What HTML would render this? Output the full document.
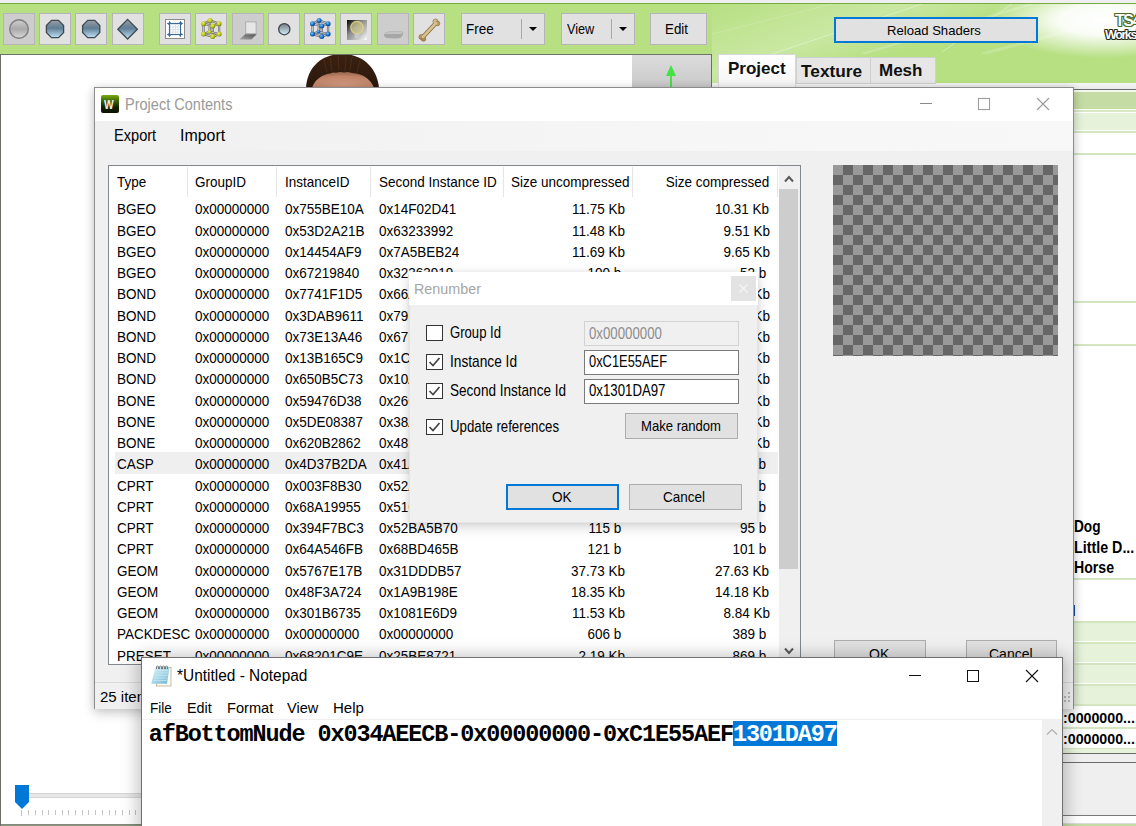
<!DOCTYPE html>
<html><head><meta charset="utf-8">
<style>
*{margin:0;padding:0;box-sizing:border-box}
html,body{width:1136px;height:826px;overflow:hidden;background:#fff;font-family:"Liberation Sans",sans-serif;color:#000;position:relative}
.a{position:absolute}
.tx{white-space:nowrap;line-height:normal}
</style></head><body>
<div class="a" style="left:0px;top:0px;width:1136px;height:3px;background:#efeff1"></div>
<div class="a" style="left:0px;top:3px;width:1136px;height:1px;background:#77ab3e"></div>
<div class="a" style="left:0px;top:4px;width:1136px;height:50px;background:#b7e083"></div>
<svg class="a" style="left:712px;top:4px" width="424" height="50"><g stroke="#fff" fill="none" opacity=".35"><path d="M60 50 L210 0" stroke-width="1"/><path d="M150 50 L320 0" stroke-width="2" opacity=".6"/><path d="M230 48 L300 0" stroke-width="1"/><path d="M270 50 L420 10" stroke-width="3" opacity=".5"/><path d="M0 30 L120 0" stroke-width="1" opacity=".5"/></g></svg>
<div class="a" style="left:0px;top:54px;width:712px;height:1px;background:#6e7466"></div>
<div class="a" style="left:0px;top:54px;width:1px;height:772px;background:#6b7062"></div>
<div class="a" style="left:712px;top:54px;width:424px;height:29px;background:#b7e083"></div>
<div class="a" style="left:712px;top:83px;width:424px;height:6px;background:linear-gradient(#f6f6f6,#e9e9e9)"></div>
<div class="a" style="left:712px;top:89px;width:424px;height:1px;background:#6a6a6a"></div>
<div class="a" style="left:712px;top:4px;width:424px;height:79px;background:radial-gradient(ellipse 115px 38px at 392px 16px,rgba(255,255,255,1) 0%,rgba(255,255,255,.92) 40%,rgba(255,255,255,0) 100%),linear-gradient(160deg,rgba(255,255,255,0) 0px,rgba(255,255,255,.25) 30%,rgba(255,255,255,0) 50%);"></div>
<svg width="0" height="0" class="a"><defs>
<linearGradient id="gS" x1="0" y1="0" x2="0" y2="1"><stop offset="0" stop-color="#cfcfcf"/><stop offset=".5" stop-color="#a9a9a9"/><stop offset="1" stop-color="#d8d8d8"/></linearGradient>
<linearGradient id="gB" x1="0" y1="0" x2="0" y2="1"><stop offset="0" stop-color="#9a9ea2"/><stop offset=".45" stop-color="#5f7d94"/><stop offset="1" stop-color="#bfe3f6"/></linearGradient>
<linearGradient id="gSp" x1="0" y1="0" x2="0" y2="1"><stop offset="0" stop-color="#767e84"/><stop offset=".5" stop-color="#a4b4bc"/><stop offset="1" stop-color="#d4f2fa"/></linearGradient>
<linearGradient id="gBulb" x1="0" y1="0" x2="1" y2="1"><stop offset="0" stop-color="#000"/><stop offset=".4" stop-color="#8a8a8a"/><stop offset=".75" stop-color="#c8c8c8"/><stop offset="1" stop-color="#fff"/></linearGradient>
<linearGradient id="gPl" x1="1" y1="0" x2="0" y2="1"><stop offset="0" stop-color="#505050"/><stop offset="1" stop-color="#a8a8a8"/></linearGradient>
<radialGradient id="gY" cx=".4" cy=".35" r=".7"><stop offset="0" stop-color="#e8ec50"/><stop offset=".6" stop-color="#b8c020"/><stop offset="1" stop-color="#5a7000"/></radialGradient>
<radialGradient id="gBl" cx=".4" cy=".35" r=".7"><stop offset="0" stop-color="#7ac4f4"/><stop offset=".55" stop-color="#1a70c8"/><stop offset="1" stop-color="#003a90"/></radialGradient>
<linearGradient id="gBone" x1="0" y1="0" x2="1" y2="1"><stop offset="0" stop-color="#e8d6a8"/><stop offset="1" stop-color="#9c7a45"/></linearGradient>
</defs></svg>
<div class="a" style="left:3px;top:13px;width:32px;height:32px;background:#cdcdcd;border:1px solid #b6b3bb;box-sizing:border-box"><svg class="a" style="left:-1px;top:-1px" width="32" height="32" viewBox="0 0 32 32"><ellipse cx="16" cy="16" rx="9.3" ry="9.3" fill="url(#gS)" stroke="#7e7e7e" stroke-width="1.4"/></svg></div>
<div class="a" style="left:39px;top:13px;width:32px;height:32px;background:#e1e1e1;border:1px solid #b6b3bb;box-sizing:border-box"><svg class="a" style="left:-1px;top:-1px" width="32" height="32" viewBox="0 0 32 32"><polygon points="12.5,7.4 19.5,7.4 24.6,12.5 24.6,19.5 19.5,24.6 12.5,24.6 7.4,19.5 7.4,12.5" fill="url(#gB)" stroke="#3e4a52" stroke-width="1.3"/></svg></div>
<div class="a" style="left:75px;top:13px;width:32px;height:32px;background:#e1e1e1;border:1px solid #b6b3bb;box-sizing:border-box"><svg class="a" style="left:-1px;top:-1px" width="32" height="32" viewBox="0 0 32 32"><polygon points="12.7,7.4 19.7,7.4 24.8,12.5 24.8,19.5 19.7,24.6 12.7,24.6 7.6,19.5 7.6,12.5" fill="url(#gB)" stroke="#3e4a52" stroke-width="1.3"/></svg></div>
<div class="a" style="left:112px;top:13px;width:32px;height:32px;background:#e1e1e1;border:1px solid #b6b3bb;box-sizing:border-box"><svg class="a" style="left:-1px;top:-1px" width="32" height="32" viewBox="0 0 32 32"><polygon points="15.6,6.4 25.4,16.2 15.6,26 5.8,16.2" fill="url(#gB)" stroke="#3e4a52" stroke-width="1.3"/></svg></div>
<div class="a" style="left:159px;top:13px;width:32px;height:32px;background:#e1e1e1;border:1px solid #b6b3bb;box-sizing:border-box"><svg class="a" style="left:-1px;top:-1px" width="32" height="32" viewBox="0 0 32 32"><rect x="6.5" y="6.5" width="19" height="19" fill="#fff" stroke="#8a8a8a"/><line x1="11.5" y1="9" x2="11.5" y2="23" stroke="#d2dde8" stroke-width=".8"/><line x1="9" y1="11.5" x2="23" y2="11.5" stroke="#d2dde8" stroke-width=".8"/><line x1="14.0" y1="9" x2="14.0" y2="23" stroke="#d2dde8" stroke-width=".8"/><line x1="9" y1="14.0" x2="23" y2="14.0" stroke="#d2dde8" stroke-width=".8"/><line x1="16.5" y1="9" x2="16.5" y2="23" stroke="#d2dde8" stroke-width=".8"/><line x1="9" y1="16.5" x2="23" y2="16.5" stroke="#d2dde8" stroke-width=".8"/><line x1="19.0" y1="9" x2="19.0" y2="23" stroke="#d2dde8" stroke-width=".8"/><line x1="9" y1="19.0" x2="23" y2="19.0" stroke="#d2dde8" stroke-width=".8"/><path d="M10.5 8.5v15M21.5 8.5v15M8.5 10.5h15M8.5 21.5h15" stroke="#3a6b9c" stroke-width="1"/><path d="M10.5 8l-1.5 2h3zM21.5 8l-1.5 2h3zM10.5 24l-1.5 -2h3zM21.5 24l-1.5 -2h3zM8 10.5l2 -1.5v3zM8 21.5l2 -1.5v3zM24 10.5l-2 -1.5v3zM24 21.5l-2 -1.5v3z" fill="#3a6b9c"/></svg></div>
<div class="a" style="left:195px;top:13px;width:32px;height:32px;background:#e1e1e1;border:1px solid #b6b3bb;box-sizing:border-box"><svg class="a" style="left:-1px;top:-1px" width="32" height="32" viewBox="0 0 32 32"><line x1="8.5" y1="10.7" x2="8.5" y2="21.1" stroke="#6e6e6e" stroke-width="2.3"/><line x1="8.5" y1="10.7" x2="8.5" y2="21.1" stroke="#e8e8e8" stroke-width=".7"/><line x1="24.1" y1="10.7" x2="24.1" y2="21.1" stroke="#6e6e6e" stroke-width="2.3"/><line x1="24.1" y1="10.7" x2="24.1" y2="21.1" stroke="#e8e8e8" stroke-width=".7"/><line x1="17.7" y1="13" x2="17.7" y2="23.6" stroke="#6e6e6e" stroke-width="2.3"/><line x1="17.7" y1="13" x2="17.7" y2="23.6" stroke="#e8e8e8" stroke-width=".7"/><line x1="15.1" y1="7.5" x2="14.5" y2="18.8" stroke="#6e6e6e" stroke-width="2.3"/><line x1="15.1" y1="7.5" x2="14.5" y2="18.8" stroke="#e8e8e8" stroke-width=".7"/><line x1="8.5" y1="10.7" x2="15.1" y2="7.5" stroke="#6e6e6e" stroke-width="2.3"/><line x1="8.5" y1="10.7" x2="15.1" y2="7.5" stroke="#e8e8e8" stroke-width=".7"/><line x1="15.1" y1="7.5" x2="24.1" y2="10.7" stroke="#6e6e6e" stroke-width="2.3"/><line x1="15.1" y1="7.5" x2="24.1" y2="10.7" stroke="#e8e8e8" stroke-width=".7"/><line x1="8.5" y1="10.7" x2="17.7" y2="13" stroke="#6e6e6e" stroke-width="2.3"/><line x1="8.5" y1="10.7" x2="17.7" y2="13" stroke="#e8e8e8" stroke-width=".7"/><line x1="17.7" y1="13" x2="24.1" y2="10.7" stroke="#6e6e6e" stroke-width="2.3"/><line x1="17.7" y1="13" x2="24.1" y2="10.7" stroke="#e8e8e8" stroke-width=".7"/><line x1="8.5" y1="21.1" x2="14.5" y2="18.8" stroke="#6e6e6e" stroke-width="2.3"/><line x1="8.5" y1="21.1" x2="14.5" y2="18.8" stroke="#e8e8e8" stroke-width=".7"/><line x1="14.5" y1="18.8" x2="24.1" y2="21.1" stroke="#6e6e6e" stroke-width="2.3"/><line x1="14.5" y1="18.8" x2="24.1" y2="21.1" stroke="#e8e8e8" stroke-width=".7"/><line x1="8.5" y1="21.1" x2="17.7" y2="23.6" stroke="#6e6e6e" stroke-width="2.3"/><line x1="8.5" y1="21.1" x2="17.7" y2="23.6" stroke="#e8e8e8" stroke-width=".7"/><line x1="17.7" y1="23.6" x2="24.1" y2="21.1" stroke="#6e6e6e" stroke-width="2.3"/><line x1="17.7" y1="23.6" x2="24.1" y2="21.1" stroke="#e8e8e8" stroke-width=".7"/><circle cx="14.5" cy="18.8" r="1.9" fill="url(#gY)"/><circle cx="15.1" cy="7.5" r="2.5" fill="url(#gY)"/><circle cx="8.5" cy="10.7" r="2.5" fill="url(#gY)"/><circle cx="24.1" cy="10.7" r="2.5" fill="url(#gY)"/><circle cx="8.5" cy="21.1" r="2.5" fill="url(#gY)"/><circle cx="24.1" cy="21.1" r="2.5" fill="url(#gY)"/><circle cx="17.7" cy="13" r="2.5" fill="url(#gY)"/><circle cx="17.7" cy="23.6" r="2.5" fill="url(#gY)"/></svg></div>
<div class="a" style="left:232px;top:13px;width:32px;height:32px;background:#cdcdcd;border:1px solid #b6b3bb;box-sizing:border-box"><svg class="a" style="left:-1px;top:-1px" width="32" height="32" viewBox="0 0 32 32"><rect x="13.7" y="8.9" width="10.4" height="11.8" fill="#e6e6e6" stroke="#a8a8a8" stroke-width=".9"/><polygon points="13.2,21.2 24.6,21.2 19.4,26.6 7.4,26.6" fill="url(#gPl)"/></svg></div>
<div class="a" style="left:268px;top:13px;width:32px;height:32px;background:#e1e1e1;border:1px solid #b6b3bb;box-sizing:border-box"><svg class="a" style="left:-1px;top:-1px" width="32" height="32" viewBox="0 0 32 32"><circle cx="16.3" cy="16.2" r="5.6" fill="url(#gSp)" stroke="#3e464c" stroke-width="1.3"/></svg></div>
<div class="a" style="left:304px;top:13px;width:32px;height:32px;background:#e1e1e1;border:1px solid #b6b3bb;box-sizing:border-box"><svg class="a" style="left:-1px;top:-1px" width="32" height="32" viewBox="0 0 32 32"><line x1="8.5" y1="10.7" x2="8.5" y2="21.1" stroke="#6e6e6e" stroke-width="2.3"/><line x1="8.5" y1="10.7" x2="8.5" y2="21.1" stroke="#e8e8e8" stroke-width=".7"/><line x1="24.1" y1="10.7" x2="24.1" y2="21.1" stroke="#6e6e6e" stroke-width="2.3"/><line x1="24.1" y1="10.7" x2="24.1" y2="21.1" stroke="#e8e8e8" stroke-width=".7"/><line x1="17.7" y1="13" x2="17.7" y2="23.6" stroke="#6e6e6e" stroke-width="2.3"/><line x1="17.7" y1="13" x2="17.7" y2="23.6" stroke="#e8e8e8" stroke-width=".7"/><line x1="15.1" y1="7.5" x2="14.5" y2="18.8" stroke="#6e6e6e" stroke-width="2.3"/><line x1="15.1" y1="7.5" x2="14.5" y2="18.8" stroke="#e8e8e8" stroke-width=".7"/><line x1="8.5" y1="10.7" x2="15.1" y2="7.5" stroke="#6e6e6e" stroke-width="2.3"/><line x1="8.5" y1="10.7" x2="15.1" y2="7.5" stroke="#e8e8e8" stroke-width=".7"/><line x1="15.1" y1="7.5" x2="24.1" y2="10.7" stroke="#6e6e6e" stroke-width="2.3"/><line x1="15.1" y1="7.5" x2="24.1" y2="10.7" stroke="#e8e8e8" stroke-width=".7"/><line x1="8.5" y1="10.7" x2="17.7" y2="13" stroke="#6e6e6e" stroke-width="2.3"/><line x1="8.5" y1="10.7" x2="17.7" y2="13" stroke="#e8e8e8" stroke-width=".7"/><line x1="17.7" y1="13" x2="24.1" y2="10.7" stroke="#6e6e6e" stroke-width="2.3"/><line x1="17.7" y1="13" x2="24.1" y2="10.7" stroke="#e8e8e8" stroke-width=".7"/><line x1="8.5" y1="21.1" x2="14.5" y2="18.8" stroke="#6e6e6e" stroke-width="2.3"/><line x1="8.5" y1="21.1" x2="14.5" y2="18.8" stroke="#e8e8e8" stroke-width=".7"/><line x1="14.5" y1="18.8" x2="24.1" y2="21.1" stroke="#6e6e6e" stroke-width="2.3"/><line x1="14.5" y1="18.8" x2="24.1" y2="21.1" stroke="#e8e8e8" stroke-width=".7"/><line x1="8.5" y1="21.1" x2="17.7" y2="23.6" stroke="#6e6e6e" stroke-width="2.3"/><line x1="8.5" y1="21.1" x2="17.7" y2="23.6" stroke="#e8e8e8" stroke-width=".7"/><line x1="17.7" y1="23.6" x2="24.1" y2="21.1" stroke="#6e6e6e" stroke-width="2.3"/><line x1="17.7" y1="23.6" x2="24.1" y2="21.1" stroke="#e8e8e8" stroke-width=".7"/><circle cx="14.5" cy="18.8" r="1.9" fill="url(#gBl)"/><circle cx="15.1" cy="7.5" r="2.5" fill="url(#gBl)"/><circle cx="8.5" cy="10.7" r="2.5" fill="url(#gBl)"/><circle cx="24.1" cy="10.7" r="2.5" fill="url(#gBl)"/><circle cx="8.5" cy="21.1" r="2.5" fill="url(#gBl)"/><circle cx="24.1" cy="21.1" r="2.5" fill="url(#gBl)"/><circle cx="17.7" cy="13" r="2.5" fill="url(#gBl)"/><circle cx="17.7" cy="23.6" r="2.5" fill="url(#gBl)"/></svg></div>
<div class="a" style="left:340px;top:13px;width:32px;height:32px;background:#e1e1e1;border:1px solid #b6b3bb;box-sizing:border-box"><svg class="a" style="left:-1px;top:-1px" width="32" height="32" viewBox="0 0 32 32"><rect x="7" y="7" width="20" height="20" fill="url(#gBulb)"/><circle cx="17" cy="14.5" r="6.6" fill="#d8d090" opacity=".6"/><circle cx="17" cy="14.5" r="6.2" fill="none" stroke="#e0d878" stroke-width="1.2" opacity=".8"/><rect x="14.5" y="20.5" width="5" height="5" rx="1.5" fill="#c8c8c8"/></svg></div>
<div class="a" style="left:377px;top:13px;width:32px;height:32px;background:#cdcdcd;border:1px solid #b6b3bb;box-sizing:border-box"><svg class="a" style="left:-1px;top:-1px" width="32" height="32" viewBox="0 0 32 32"><path d="M7 21.5 Q8 19 12 18.5 L25 18.5 Q27 19.5 26 21.5 L24 24.5 Q22 25.5 18 25.5 L10 25 Q7 24 7 21.5Z" fill="#a6a6a6"/><path d="M7.5 21 Q9 19 12 19 L25 19 Q26 20 25 21 Z" fill="#c4c4c4"/></svg></div>
<div class="a" style="left:413px;top:13px;width:32px;height:32px;background:#e1e1e1;border:1px solid #b6b3bb;box-sizing:border-box"><svg class="a" style="left:-1px;top:-1px" width="32" height="32" viewBox="0 0 32 32"><path d="M10 24 L23 10" stroke="#8a6a3a" stroke-width="4.2" stroke-linecap="round"/><circle cx="8.5" cy="24" r="2.6" fill="#b89860" stroke="#8a6a3a" stroke-width=".6"/><circle cx="10.5" cy="26" r="2.3" fill="#a88850" stroke="#8a6a3a" stroke-width=".6"/><circle cx="22.5" cy="8.5" r="2.6" fill="#d0b880" stroke="#8a6a3a" stroke-width=".6"/><circle cx="24.5" cy="10.5" r="2.3" fill="#b89860" stroke="#8a6a3a" stroke-width=".6"/><path d="M10 24 L23 10" stroke="#d8c090" stroke-width="2.6" stroke-linecap="round"/></svg></div>
<div class="a" style="left:461px;top:13px;width:84px;height:32px;background:#e1e1e1;border:1px solid #b6b3bb"></div>
<div class="a" style="left:521px;top:19px;width:1px;height:20px;background:#a9a9a9"></div>
<svg class="a" style="left:529px;top:27px" width="9" height="5"><polygon points="0,0 8,0 4,4" fill="#000"/></svg>
<div class="a tx" style="top:21.30px;font-size:13.81px;color:#000;font-family:'Liberation Sans',sans-serif;left:466.4px;transform:scaleX(0.976);transform-origin:0 0;">Free</div>
<div class="a" style="left:561px;top:13px;width:74px;height:32px;background:#e1e1e1;border:1px solid #b6b3bb"></div>
<div class="a" style="left:611px;top:19px;width:1px;height:20px;background:#a9a9a9"></div>
<svg class="a" style="left:619px;top:27px" width="9" height="5"><polygon points="0,0 8,0 4,4" fill="#000"/></svg>
<div class="a tx" style="top:21.30px;font-size:13.81px;color:#000;font-family:'Liberation Sans',sans-serif;left:566.7px;transform:scaleX(0.92);transform-origin:0 0;">View</div>
<div class="a" style="left:650px;top:13px;width:57px;height:32px;background:#e1e1e1;border:1px solid #b6b3bb"></div>
<div class="a tx" style="top:21.30px;font-size:13.81px;color:#000;font-family:'Liberation Sans',sans-serif;left:665.2px;transform:scaleX(0.966);transform-origin:0 0;">Edit</div>
<div class="a" style="left:834px;top:17px;width:204px;height:26px;background:#e1e1e1;border:2px solid #0078d7"></div>
<div class="a tx" style="top:22.60px;font-size:13.37px;color:#000;font-family:'Liberation Sans',sans-serif;left:887.0px;transform:scaleX(0.98);transform-origin:0 0;">Reload Shaders</div>
<div class="a tx" style="left:1115px;top:12px;font-size:16px;font-weight:bold;color:#fff;letter-spacing:-1.5px;text-shadow:1px 0 #4a6a2a,-1px 0 #4a6a2a,0 1px #4a6a2a,0 -1px #4a6a2a,1px 1px #4a6a2a,-1px -1px #4a6a2a,1px -1px #4a6a2a,-1px 1px #4a6a2a">TS4</div>
<div class="a tx" style="left:1105px;top:28px;font-size:12.5px;font-weight:bold;color:#fff;letter-spacing:-1.4px;text-shadow:1px 0 #222,-1px 0 #222,0 1px #222,0 -1px #222,1px 1px #3a5a20,-1px -1px #3a5a20,1px -1px #3a5a20,-1px 1px #3a5a20">Workshop</div>
<div class="a" style="left:632px;top:55px;width:80px;height:32px;background:linear-gradient(#dcdcdc,#c9c9c9);border-right:1px solid #6e6e6e"></div>
<svg class="a" style="left:665px;top:65px" width="12" height="23"><polygon points="6,0 11,11 1,11" fill="#44e244"/><rect x="5" y="10" width="2" height="13" fill="#44e244"/></svg>
<div class="a" style="left:718px;top:54px;width:78px;height:34px;background:linear-gradient(#ffffff,#f4f4f4);border:1px solid #d8d8d8;border-bottom:none"></div>
<div class="a" style="left:796px;top:57px;width:75px;height:27px;background:#e6e6e6;border:1px solid #cfcfcf"></div>
<div class="a" style="left:870px;top:57px;width:66px;height:27px;background:#e6e6e6;border:1px solid #cfcfcf"></div>
<div class="a tx" style="top:58.62px;font-size:17px;color:#111;font-family:'Liberation Sans',sans-serif;font-weight:bold;left:728px;">Project</div>
<div class="a tx" style="top:60.84px;font-size:17.3px;color:#111;font-family:'Liberation Sans',sans-serif;font-weight:bold;left:801px;">Texture</div>
<div class="a tx" style="top:61.12px;font-size:17px;color:#111;font-family:'Liberation Sans',sans-serif;font-weight:bold;left:879px;">Mesh</div>
<svg class="a" style="left:300px;top:55px" width="90" height="33" viewBox="0 0 90 33">
<defs><linearGradient id="hair" x1="0" y1="0" x2="0" y2="1"><stop offset="0" stop-color="#3a2112"/><stop offset="1" stop-color="#2a180c"/></linearGradient>
<radialGradient id="skin" cx=".5" cy=".8" r=".75"><stop offset="0" stop-color="#d29a80"/><stop offset=".7" stop-color="#c08468"/><stop offset="1" stop-color="#9c6a52"/></radialGradient></defs>
<path d="M6 33 C7 12 22 -1 42 -1 C62 -1 77 12 79 33 Z" fill="url(#hair)"/>
<path d="M30 2 L32 16 M38 1 L39 15 M46 1 L45 16 M52 2 L50 15 M24 5 L27 17 M60 5 L57 18" stroke="#5a3418" stroke-width="1" opacity=".6"/>
<path d="M12 33 C14 26 20 21 27 19 L30 18.5 L33 17.5 L36 17.8 L40 17 L44 17.4 L48 17 L52 18 L56 18.5 L60 19.5 C67 22 72 27 74 33 Z" fill="url(#skin)"/>
</svg>
<div class="a" style="left:1073px;top:90px;width:63px;height:2px;background:#f4f8ef"></div>
<div class="a" style="left:1073px;top:92px;width:63px;height:17px;background:#c5dca5"></div>
<div class="a" style="left:1073px;top:110px;width:63px;height:2px;background:#d9e9c8"></div>
<div class="a" style="left:1073px;top:113px;width:63px;height:17px;background:#e6f3da"></div>
<div class="a" style="left:1073px;top:131px;width:63px;height:2px;background:#d5e6c4"></div>
<div class="a" style="left:1073px;top:153px;width:63px;height:2px;background:#d3e6c0"></div>
<div class="a" style="left:1073px;top:301px;width:63px;height:2px;background:#d3e6c0"></div>
<div class="a" style="left:1073px;top:344px;width:63px;height:2px;background:#d3e6c0"></div>
<div class="a" style="left:1073px;top:578px;width:63px;height:2px;background:#d3e6c0"></div>
<div class="a tx" style="top:518.06px;font-size:15.84px;color:#000;font-family:'Liberation Sans',sans-serif;font-weight:bold;left:1074.2px;transform:scaleX(0.863);transform-origin:0 0;">Dog</div>
<div class="a tx" style="top:538.86px;font-size:15.84px;color:#000;font-family:'Liberation Sans',sans-serif;font-weight:bold;left:1074.2px;transform:scaleX(0.902);transform-origin:0 0;">Little D...</div>
<div class="a tx" style="top:559.46px;font-size:15.84px;color:#000;font-family:'Liberation Sans',sans-serif;font-weight:bold;left:1074.2px;transform:scaleX(0.891);transform-origin:0 0;">Horse</div>
<div class="a" style="left:1073px;top:605px;width:2px;height:11px;background:#1a4aa0"></div>
<div class="a" style="left:1073px;top:621px;width:63px;height:20px;background:#e6f2da;border-top:2px solid #d3e6c0"></div>
<div class="a" style="left:1073px;top:642px;width:63px;height:20px;background:#e6f2da;border-top:2px solid #d3e6c0"></div>
<div class="a" style="left:1073px;top:663px;width:63px;height:20px;background:#e6f2da;border-top:2px solid #d3e6c0"></div>
<div class="a" style="left:1073px;top:684px;width:63px;height:20px;background:#e6f2da;border-top:2px solid #d3e6c0"></div>
<div class="a" style="left:1073px;top:704px;width:63px;height:2px;background:#d3e6c0"></div>
<div class="a tx" style="top:709.71px;font-size:14.24px;color:#000;font-family:'Liberation Sans',sans-serif;font-weight:bold;left:1063.0px;transform:scaleX(0.999);transform-origin:0 0;">:0000000...</div>
<div class="a tx" style="top:730.61px;font-size:14.24px;color:#000;font-family:'Liberation Sans',sans-serif;font-weight:bold;left:1063.0px;transform:scaleX(0.999);transform-origin:0 0;">:0000000...</div>
<div class="a" style="left:1063px;top:727px;width:73px;height:2px;background:#d3e6c0"></div>
<div class="a" style="left:1063px;top:748px;width:73px;height:5px;background:#e6f2da;border-top:1px solid #d3e6c0"></div>
<div class="a" style="left:1063px;top:753px;width:73px;height:1px;background:#6a6a6a"></div>
<div class="a" style="left:1063px;top:754px;width:73px;height:8px;background:#efefef"></div>
<div class="a" style="left:1063px;top:762px;width:73px;height:1px;background:#6a6a6a"></div>
<div class="a" style="left:1063px;top:763px;width:73px;height:52px;background:#efefef"></div>
<div class="a" style="left:1063px;top:815px;width:73px;height:1px;background:#7a7a7a"></div>
<div class="a" style="left:1063px;top:816px;width:73px;height:7px;background:#fff"></div>
<div class="a" style="left:1063px;top:823px;width:73px;height:1px;background:#dcdcdc"></div>
<div class="a" style="left:1063px;top:824px;width:73px;height:2px;background:#c5dca5"></div>
<div class="a" style="left:1px;top:824px;width:1062px;height:1px;background:#858585"></div>
<div class="a" style="left:1px;top:825px;width:1062px;height:1px;background:#8aa070"></div>
<div class="a" style="left:15px;top:793px;width:1000px;height:5px;background:#e7e7e7;border:1px solid #d6d6d6"></div>
<svg class="a" style="left:14px;top:785px" width="16" height="25"><polygon points="1,0 15,0 15,17 8,24 1,17" fill="#0078d7"/></svg>
<div class="a" style="left:21px;top:810px;width:1px;height:6px;background:#c4c4c4"></div>
<div class="a" style="left:28px;top:810px;width:1px;height:5px;background:#c4c4c4"></div>
<div class="a" style="left:35px;top:810px;width:1px;height:5px;background:#c4c4c4"></div>
<div class="a" style="left:42px;top:810px;width:1px;height:5px;background:#c4c4c4"></div>
<div class="a" style="left:48px;top:810px;width:1px;height:5px;background:#c4c4c4"></div>
<div class="a" style="left:55px;top:810px;width:1px;height:5px;background:#c4c4c4"></div>
<div class="a" style="left:62px;top:810px;width:1px;height:5px;background:#c4c4c4"></div>
<div class="a" style="left:68px;top:810px;width:1px;height:5px;background:#c4c4c4"></div>
<div class="a" style="left:75px;top:810px;width:1px;height:5px;background:#c4c4c4"></div>
<div class="a" style="left:82px;top:810px;width:1px;height:5px;background:#c4c4c4"></div>
<div class="a" style="left:88px;top:810px;width:1px;height:5px;background:#c4c4c4"></div>
<div class="a" style="left:95px;top:810px;width:1px;height:5px;background:#c4c4c4"></div>
<div class="a" style="left:102px;top:810px;width:1px;height:5px;background:#c4c4c4"></div>
<div class="a" style="left:109px;top:810px;width:1px;height:5px;background:#c4c4c4"></div>
<div class="a" style="left:115px;top:810px;width:1px;height:5px;background:#c4c4c4"></div>
<div class="a" style="left:122px;top:810px;width:1px;height:5px;background:#c4c4c4"></div>
<div class="a" style="left:129px;top:810px;width:1px;height:5px;background:#c4c4c4"></div>
<div class="a" style="left:135px;top:810px;width:1px;height:5px;background:#c4c4c4"></div>
<div class="a" style="left:142px;top:810px;width:1px;height:5px;background:#c4c4c4"></div>
<div class="a" style="left:94px;top:87px;width:980px;height:622px;background:#f0f0f0;border:1px solid #8c8c8c;border-bottom:none;box-shadow:0 4px 11px 0 rgba(0,0,0,.2),0 0 8px 0 rgba(0,0,0,.08)"></div>
<div class="a" style="left:95px;top:88px;width:978px;height:33px;background:#fff"></div>
<div class="a" style="left:101px;top:95px;width:18px;height:18px;border-radius:2px;background:linear-gradient(#7aac12,#3a6204 35%,#142400 65%,#0a1200)"></div>
<div class="a tx" style="left:104px;top:98px;font-size:12px;font-weight:bold;color:#eee;font-family:'Liberation Sans',sans-serif;transform:scaleX(.85);transform-origin:0 0">W</div>
<div class="a tx" style="top:95.99px;font-size:15.7px;color:#9a9a9a;font-family:'Liberation Sans',sans-serif;left:125.0px;transform:scaleX(0.926);transform-origin:0 0;">Project Contents</div>
<div class="a" style="left:920px;top:103px;width:12px;height:1px;background:#8a8a8a"></div>
<div class="a" style="left:978px;top:98px;width:12px;height:12px;border:1px solid #9a9a9a"></div>
<svg class="a" style="left:1036px;top:97px" width="14" height="14"><path d="M1 1L13 13M13 1L1 13" stroke="#9a9a9a" stroke-width="1.1"/></svg>
<div class="a" style="left:95px;top:121px;width:978px;height:30px;background:linear-gradient(90deg,#f0f0f0,#f6f6f6 60%,#f8f8f8)"></div>
<div class="a tx" style="top:126.83px;font-size:15.99px;color:#000;font-family:'Liberation Sans',sans-serif;left:113.8px;transform:scaleX(0.913);transform-origin:0 0;">Export</div>
<div class="a tx" style="top:126.83px;font-size:15.99px;color:#000;font-family:'Liberation Sans',sans-serif;left:180.0px;transform:scaleX(0.997);transform-origin:0 0;">Import</div>
<div class="a" style="left:108px;top:165px;width:693px;height:500px;background:#fff;border:1px solid #828790;overflow:hidden">
<div class="a" style="left:78px;top:1px;width:1px;height:30px;background:#e5e5e5"></div>
<div class="a" style="left:167px;top:1px;width:1px;height:30px;background:#e5e5e5"></div>
<div class="a" style="left:261px;top:1px;width:1px;height:30px;background:#e5e5e5"></div>
<div class="a" style="left:394px;top:1px;width:1px;height:30px;background:#e5e5e5"></div>
<div class="a" style="left:523px;top:1px;width:1px;height:30px;background:#e5e5e5"></div>
<div class="a" style="left:668px;top:1px;width:1px;height:30px;background:#e5e5e5"></div>
<div class="a tx" style="left:7.5px;top:7.88px;font-size:14.5px;color:#000;transform:scaleX(0.93);transform-origin:0 0">Type</div>
<div class="a tx" style="left:85.5px;top:7.88px;font-size:14.5px;color:#000;transform:scaleX(0.93);transform-origin:0 0">GroupID</div>
<div class="a tx" style="left:176px;top:7.88px;font-size:14.5px;color:#000;transform:scaleX(0.93);transform-origin:0 0">InstanceID</div>
<div class="a tx" style="left:269.5px;top:7.88px;font-size:14.5px;color:#000;transform:scaleX(0.93);transform-origin:0 0">Second Instance ID</div>
<div class="a tx" style="left:401.5px;top:7.88px;font-size:14.5px;color:#000;transform:scaleX(0.93);transform-origin:0 0">Size uncompressed</div>
<div class="a tx" style="right:31px;top:7.88px;font-size:14.5px;color:#000;transform:scaleX(0.93);transform-origin:100% 0">Size compressed</div>
<div class="a tx" style="left:7.5px;top:35.38px;font-size:14.5px;color:#000;transform:scaleX(0.93);transform-origin:0 0">BGEO</div>
<div class="a tx" style="left:85.5px;top:35.38px;font-size:14.5px;color:#000;transform:scaleX(0.93);transform-origin:0 0">0x00000000</div>
<div class="a tx" style="left:176px;top:35.38px;font-size:14.5px;color:#000;transform:scaleX(0.93);transform-origin:0 0">0x755BE10A</div>
<div class="a tx" style="left:269.5px;top:35.38px;font-size:14.5px;color:#000;transform:scaleX(0.93);transform-origin:0 0">0x14F02D41</div>
<div class="a tx" style="right:175px;top:35.38px;font-size:14.5px;color:#000;transform:scaleX(0.93);transform-origin:100% 0">11.75 Kb</div>
<div class="a tx" style="right:30.5px;top:35.38px;font-size:14.5px;color:#000;transform:scaleX(0.93);transform-origin:100% 0">10.31 Kb</div>
<div class="a tx" style="left:7.5px;top:56.63px;font-size:14.5px;color:#000;transform:scaleX(0.93);transform-origin:0 0">BGEO</div>
<div class="a tx" style="left:85.5px;top:56.63px;font-size:14.5px;color:#000;transform:scaleX(0.93);transform-origin:0 0">0x00000000</div>
<div class="a tx" style="left:176px;top:56.63px;font-size:14.5px;color:#000;transform:scaleX(0.93);transform-origin:0 0">0x53D2A21B</div>
<div class="a tx" style="left:269.5px;top:56.63px;font-size:14.5px;color:#000;transform:scaleX(0.93);transform-origin:0 0">0x63233992</div>
<div class="a tx" style="right:175px;top:56.63px;font-size:14.5px;color:#000;transform:scaleX(0.93);transform-origin:100% 0">11.48 Kb</div>
<div class="a tx" style="right:30.5px;top:56.63px;font-size:14.5px;color:#000;transform:scaleX(0.93);transform-origin:100% 0">9.51 Kb</div>
<div class="a tx" style="left:7.5px;top:77.88px;font-size:14.5px;color:#000;transform:scaleX(0.93);transform-origin:0 0">BGEO</div>
<div class="a tx" style="left:85.5px;top:77.88px;font-size:14.5px;color:#000;transform:scaleX(0.93);transform-origin:0 0">0x00000000</div>
<div class="a tx" style="left:176px;top:77.88px;font-size:14.5px;color:#000;transform:scaleX(0.93);transform-origin:0 0">0x14454AF9</div>
<div class="a tx" style="left:269.5px;top:77.88px;font-size:14.5px;color:#000;transform:scaleX(0.93);transform-origin:0 0">0x7A5BEB24</div>
<div class="a tx" style="right:175px;top:77.88px;font-size:14.5px;color:#000;transform:scaleX(0.93);transform-origin:100% 0">11.69 Kb</div>
<div class="a tx" style="right:30.5px;top:77.88px;font-size:14.5px;color:#000;transform:scaleX(0.93);transform-origin:100% 0">9.65 Kb</div>
<div class="a tx" style="left:7.5px;top:99.13px;font-size:14.5px;color:#000;transform:scaleX(0.93);transform-origin:0 0">BGEO</div>
<div class="a tx" style="left:85.5px;top:99.13px;font-size:14.5px;color:#000;transform:scaleX(0.93);transform-origin:0 0">0x00000000</div>
<div class="a tx" style="left:176px;top:99.13px;font-size:14.5px;color:#000;transform:scaleX(0.93);transform-origin:0 0">0x67219840</div>
<div class="a tx" style="left:269.5px;top:99.13px;font-size:14.5px;color:#000;transform:scaleX(0.93);transform-origin:0 0">0x32363919</div>
<div class="a tx" style="right:178.5px;top:99.13px;font-size:14.5px;color:#000;transform:scaleX(0.93);transform-origin:100% 0">100 b</div>
<div class="a tx" style="right:34.0px;top:99.13px;font-size:14.5px;color:#000;transform:scaleX(0.93);transform-origin:100% 0">52 b</div>
<div class="a tx" style="left:7.5px;top:120.38px;font-size:14.5px;color:#000;transform:scaleX(0.93);transform-origin:0 0">BOND</div>
<div class="a tx" style="left:85.5px;top:120.38px;font-size:14.5px;color:#000;transform:scaleX(0.93);transform-origin:0 0">0x00000000</div>
<div class="a tx" style="left:176px;top:120.38px;font-size:14.5px;color:#000;transform:scaleX(0.93);transform-origin:0 0">0x7741F1D5</div>
<div class="a tx" style="left:269.5px;top:120.38px;font-size:14.5px;color:#000;transform:scaleX(0.93);transform-origin:0 0">0x66A1C3B2</div>
<div class="a tx" style="right:175px;top:120.38px;font-size:14.5px;color:#000;transform:scaleX(0.93);transform-origin:100% 0">1.21 Kb</div>
<div class="a tx" style="right:30.5px;top:120.38px;font-size:14.5px;color:#000;transform:scaleX(0.93);transform-origin:100% 0">1.01 Kb</div>
<div class="a tx" style="left:7.5px;top:141.63px;font-size:14.5px;color:#000;transform:scaleX(0.93);transform-origin:0 0">BOND</div>
<div class="a tx" style="left:85.5px;top:141.63px;font-size:14.5px;color:#000;transform:scaleX(0.93);transform-origin:0 0">0x00000000</div>
<div class="a tx" style="left:176px;top:141.63px;font-size:14.5px;color:#000;transform:scaleX(0.93);transform-origin:0 0">0x3DAB9611</div>
<div class="a tx" style="left:269.5px;top:141.63px;font-size:14.5px;color:#000;transform:scaleX(0.93);transform-origin:0 0">0x79E2D4A1</div>
<div class="a tx" style="right:175px;top:141.63px;font-size:14.5px;color:#000;transform:scaleX(0.93);transform-origin:100% 0">1.21 Kb</div>
<div class="a tx" style="right:30.5px;top:141.63px;font-size:14.5px;color:#000;transform:scaleX(0.93);transform-origin:100% 0">1.01 Kb</div>
<div class="a tx" style="left:7.5px;top:162.88px;font-size:14.5px;color:#000;transform:scaleX(0.93);transform-origin:0 0">BOND</div>
<div class="a tx" style="left:85.5px;top:162.88px;font-size:14.5px;color:#000;transform:scaleX(0.93);transform-origin:0 0">0x00000000</div>
<div class="a tx" style="left:176px;top:162.88px;font-size:14.5px;color:#000;transform:scaleX(0.93);transform-origin:0 0">0x73E13A46</div>
<div class="a tx" style="left:269.5px;top:162.88px;font-size:14.5px;color:#000;transform:scaleX(0.93);transform-origin:0 0">0x67B1A2C3</div>
<div class="a tx" style="right:175px;top:162.88px;font-size:14.5px;color:#000;transform:scaleX(0.93);transform-origin:100% 0">1.21 Kb</div>
<div class="a tx" style="right:30.5px;top:162.88px;font-size:14.5px;color:#000;transform:scaleX(0.93);transform-origin:100% 0">1.01 Kb</div>
<div class="a tx" style="left:7.5px;top:184.13px;font-size:14.5px;color:#000;transform:scaleX(0.93);transform-origin:0 0">BOND</div>
<div class="a tx" style="left:85.5px;top:184.13px;font-size:14.5px;color:#000;transform:scaleX(0.93);transform-origin:0 0">0x00000000</div>
<div class="a tx" style="left:176px;top:184.13px;font-size:14.5px;color:#000;transform:scaleX(0.93);transform-origin:0 0">0x13B165C9</div>
<div class="a tx" style="left:269.5px;top:184.13px;font-size:14.5px;color:#000;transform:scaleX(0.93);transform-origin:0 0">0x1C3D2E4F</div>
<div class="a tx" style="right:175px;top:184.13px;font-size:14.5px;color:#000;transform:scaleX(0.93);transform-origin:100% 0">1.21 Kb</div>
<div class="a tx" style="right:30.5px;top:184.13px;font-size:14.5px;color:#000;transform:scaleX(0.93);transform-origin:100% 0">1.01 Kb</div>
<div class="a tx" style="left:7.5px;top:205.38px;font-size:14.5px;color:#000;transform:scaleX(0.93);transform-origin:0 0">BOND</div>
<div class="a tx" style="left:85.5px;top:205.38px;font-size:14.5px;color:#000;transform:scaleX(0.93);transform-origin:0 0">0x00000000</div>
<div class="a tx" style="left:176px;top:205.38px;font-size:14.5px;color:#000;transform:scaleX(0.93);transform-origin:0 0">0x650B5C73</div>
<div class="a tx" style="left:269.5px;top:205.38px;font-size:14.5px;color:#000;transform:scaleX(0.93);transform-origin:0 0">0x10A2B3C4</div>
<div class="a tx" style="right:175px;top:205.38px;font-size:14.5px;color:#000;transform:scaleX(0.93);transform-origin:100% 0">1.21 Kb</div>
<div class="a tx" style="right:30.5px;top:205.38px;font-size:14.5px;color:#000;transform:scaleX(0.93);transform-origin:100% 0">1.01 Kb</div>
<div class="a tx" style="left:7.5px;top:226.63px;font-size:14.5px;color:#000;transform:scaleX(0.93);transform-origin:0 0">BONE</div>
<div class="a tx" style="left:85.5px;top:226.63px;font-size:14.5px;color:#000;transform:scaleX(0.93);transform-origin:0 0">0x00000000</div>
<div class="a tx" style="left:176px;top:226.63px;font-size:14.5px;color:#000;transform:scaleX(0.93);transform-origin:0 0">0x59476D38</div>
<div class="a tx" style="left:269.5px;top:226.63px;font-size:14.5px;color:#000;transform:scaleX(0.93);transform-origin:0 0">0x26C1D2E3</div>
<div class="a tx" style="right:175px;top:226.63px;font-size:14.5px;color:#000;transform:scaleX(0.93);transform-origin:100% 0">1.21 Kb</div>
<div class="a tx" style="right:30.5px;top:226.63px;font-size:14.5px;color:#000;transform:scaleX(0.93);transform-origin:100% 0">1.01 Kb</div>
<div class="a tx" style="left:7.5px;top:247.88px;font-size:14.5px;color:#000;transform:scaleX(0.93);transform-origin:0 0">BONE</div>
<div class="a tx" style="left:85.5px;top:247.88px;font-size:14.5px;color:#000;transform:scaleX(0.93);transform-origin:0 0">0x00000000</div>
<div class="a tx" style="left:176px;top:247.88px;font-size:14.5px;color:#000;transform:scaleX(0.93);transform-origin:0 0">0x5DE08387</div>
<div class="a tx" style="left:269.5px;top:247.88px;font-size:14.5px;color:#000;transform:scaleX(0.93);transform-origin:0 0">0x38A1B2C3</div>
<div class="a tx" style="right:175px;top:247.88px;font-size:14.5px;color:#000;transform:scaleX(0.93);transform-origin:100% 0">1.21 Kb</div>
<div class="a tx" style="right:30.5px;top:247.88px;font-size:14.5px;color:#000;transform:scaleX(0.93);transform-origin:100% 0">1.01 Kb</div>
<div class="a tx" style="left:7.5px;top:269.13px;font-size:14.5px;color:#000;transform:scaleX(0.93);transform-origin:0 0">BONE</div>
<div class="a tx" style="left:85.5px;top:269.13px;font-size:14.5px;color:#000;transform:scaleX(0.93);transform-origin:0 0">0x00000000</div>
<div class="a tx" style="left:176px;top:269.13px;font-size:14.5px;color:#000;transform:scaleX(0.93);transform-origin:0 0">0x620B2862</div>
<div class="a tx" style="left:269.5px;top:269.13px;font-size:14.5px;color:#000;transform:scaleX(0.93);transform-origin:0 0">0x48D1E2F3</div>
<div class="a tx" style="right:175px;top:269.13px;font-size:14.5px;color:#000;transform:scaleX(0.93);transform-origin:100% 0">1.21 Kb</div>
<div class="a tx" style="right:30.5px;top:269.13px;font-size:14.5px;color:#000;transform:scaleX(0.93);transform-origin:100% 0">1.01 Kb</div>
<div class="a" style="left:6px;top:286px;width:663px;height:22px;background:#efefef"></div>
<div class="a tx" style="left:7.5px;top:290.38px;font-size:14.5px;color:#000;transform:scaleX(0.93);transform-origin:0 0">CASP</div>
<div class="a tx" style="left:85.5px;top:290.38px;font-size:14.5px;color:#000;transform:scaleX(0.93);transform-origin:0 0">0x00000000</div>
<div class="a tx" style="left:176px;top:290.38px;font-size:14.5px;color:#000;transform:scaleX(0.93);transform-origin:0 0">0x4D37B2DA</div>
<div class="a tx" style="left:269.5px;top:290.38px;font-size:14.5px;color:#000;transform:scaleX(0.93);transform-origin:0 0">0x41A2B3C4</div>
<div class="a tx" style="right:175px;top:290.38px;font-size:14.5px;color:#000;transform:scaleX(0.93);transform-origin:100% 0">1.21 Kb</div>
<div class="a tx" style="right:34.0px;top:290.38px;font-size:14.5px;color:#000;transform:scaleX(0.93);transform-origin:100% 0">b</div>
<div class="a tx" style="left:7.5px;top:311.63px;font-size:14.5px;color:#000;transform:scaleX(0.93);transform-origin:0 0">CPRT</div>
<div class="a tx" style="left:85.5px;top:311.63px;font-size:14.5px;color:#000;transform:scaleX(0.93);transform-origin:0 0">0x00000000</div>
<div class="a tx" style="left:176px;top:311.63px;font-size:14.5px;color:#000;transform:scaleX(0.93);transform-origin:0 0">0x003F8B30</div>
<div class="a tx" style="left:269.5px;top:311.63px;font-size:14.5px;color:#000;transform:scaleX(0.93);transform-origin:0 0">0x52A1B2C3</div>
<div class="a tx" style="right:178.5px;top:311.63px;font-size:14.5px;color:#000;transform:scaleX(0.93);transform-origin:100% 0">115 b</div>
<div class="a tx" style="right:34.0px;top:311.63px;font-size:14.5px;color:#000;transform:scaleX(0.93);transform-origin:100% 0">b</div>
<div class="a tx" style="left:7.5px;top:332.88px;font-size:14.5px;color:#000;transform:scaleX(0.93);transform-origin:0 0">CPRT</div>
<div class="a tx" style="left:85.5px;top:332.88px;font-size:14.5px;color:#000;transform:scaleX(0.93);transform-origin:0 0">0x00000000</div>
<div class="a tx" style="left:176px;top:332.88px;font-size:14.5px;color:#000;transform:scaleX(0.93);transform-origin:0 0">0x68A19955</div>
<div class="a tx" style="left:269.5px;top:332.88px;font-size:14.5px;color:#000;transform:scaleX(0.93);transform-origin:0 0">0x51C2D3E4</div>
<div class="a tx" style="right:178.5px;top:332.88px;font-size:14.5px;color:#000;transform:scaleX(0.93);transform-origin:100% 0">115 b</div>
<div class="a tx" style="right:34.0px;top:332.88px;font-size:14.5px;color:#000;transform:scaleX(0.93);transform-origin:100% 0">b</div>
<div class="a tx" style="left:7.5px;top:354.13px;font-size:14.5px;color:#000;transform:scaleX(0.93);transform-origin:0 0">CPRT</div>
<div class="a tx" style="left:85.5px;top:354.13px;font-size:14.5px;color:#000;transform:scaleX(0.93);transform-origin:0 0">0x00000000</div>
<div class="a tx" style="left:176px;top:354.13px;font-size:14.5px;color:#000;transform:scaleX(0.93);transform-origin:0 0">0x394F7BC3</div>
<div class="a tx" style="left:269.5px;top:354.13px;font-size:14.5px;color:#000;transform:scaleX(0.93);transform-origin:0 0">0x52BA5B70</div>
<div class="a tx" style="right:178.5px;top:354.13px;font-size:14.5px;color:#000;transform:scaleX(0.93);transform-origin:100% 0">115 b</div>
<div class="a tx" style="right:34.0px;top:354.13px;font-size:14.5px;color:#000;transform:scaleX(0.93);transform-origin:100% 0">95 b</div>
<div class="a tx" style="left:7.5px;top:375.38px;font-size:14.5px;color:#000;transform:scaleX(0.93);transform-origin:0 0">CPRT</div>
<div class="a tx" style="left:85.5px;top:375.38px;font-size:14.5px;color:#000;transform:scaleX(0.93);transform-origin:0 0">0x00000000</div>
<div class="a tx" style="left:176px;top:375.38px;font-size:14.5px;color:#000;transform:scaleX(0.93);transform-origin:0 0">0x64A546FB</div>
<div class="a tx" style="left:269.5px;top:375.38px;font-size:14.5px;color:#000;transform:scaleX(0.93);transform-origin:0 0">0x68BD465B</div>
<div class="a tx" style="right:178.5px;top:375.38px;font-size:14.5px;color:#000;transform:scaleX(0.93);transform-origin:100% 0">121 b</div>
<div class="a tx" style="right:34.0px;top:375.38px;font-size:14.5px;color:#000;transform:scaleX(0.93);transform-origin:100% 0">101 b</div>
<div class="a tx" style="left:7.5px;top:396.63px;font-size:14.5px;color:#000;transform:scaleX(0.93);transform-origin:0 0">GEOM</div>
<div class="a tx" style="left:85.5px;top:396.63px;font-size:14.5px;color:#000;transform:scaleX(0.93);transform-origin:0 0">0x00000000</div>
<div class="a tx" style="left:176px;top:396.63px;font-size:14.5px;color:#000;transform:scaleX(0.93);transform-origin:0 0">0x5767E17B</div>
<div class="a tx" style="left:269.5px;top:396.63px;font-size:14.5px;color:#000;transform:scaleX(0.93);transform-origin:0 0">0x31DDDB57</div>
<div class="a tx" style="right:175px;top:396.63px;font-size:14.5px;color:#000;transform:scaleX(0.93);transform-origin:100% 0">37.73 Kb</div>
<div class="a tx" style="right:30.5px;top:396.63px;font-size:14.5px;color:#000;transform:scaleX(0.93);transform-origin:100% 0">27.63 Kb</div>
<div class="a tx" style="left:7.5px;top:417.88px;font-size:14.5px;color:#000;transform:scaleX(0.93);transform-origin:0 0">GEOM</div>
<div class="a tx" style="left:85.5px;top:417.88px;font-size:14.5px;color:#000;transform:scaleX(0.93);transform-origin:0 0">0x00000000</div>
<div class="a tx" style="left:176px;top:417.88px;font-size:14.5px;color:#000;transform:scaleX(0.93);transform-origin:0 0">0x48F3A724</div>
<div class="a tx" style="left:269.5px;top:417.88px;font-size:14.5px;color:#000;transform:scaleX(0.93);transform-origin:0 0">0x1A9B198E</div>
<div class="a tx" style="right:175px;top:417.88px;font-size:14.5px;color:#000;transform:scaleX(0.93);transform-origin:100% 0">18.35 Kb</div>
<div class="a tx" style="right:30.5px;top:417.88px;font-size:14.5px;color:#000;transform:scaleX(0.93);transform-origin:100% 0">14.18 Kb</div>
<div class="a tx" style="left:7.5px;top:439.13px;font-size:14.5px;color:#000;transform:scaleX(0.93);transform-origin:0 0">GEOM</div>
<div class="a tx" style="left:85.5px;top:439.13px;font-size:14.5px;color:#000;transform:scaleX(0.93);transform-origin:0 0">0x00000000</div>
<div class="a tx" style="left:176px;top:439.13px;font-size:14.5px;color:#000;transform:scaleX(0.93);transform-origin:0 0">0x301B6735</div>
<div class="a tx" style="left:269.5px;top:439.13px;font-size:14.5px;color:#000;transform:scaleX(0.93);transform-origin:0 0">0x1081E6D9</div>
<div class="a tx" style="right:175px;top:439.13px;font-size:14.5px;color:#000;transform:scaleX(0.93);transform-origin:100% 0">11.53 Kb</div>
<div class="a tx" style="right:30.5px;top:439.13px;font-size:14.5px;color:#000;transform:scaleX(0.93);transform-origin:100% 0">8.84 Kb</div>
<div class="a tx" style="left:7.5px;top:460.38px;font-size:14.5px;color:#000;transform:scaleX(0.93);transform-origin:0 0">PACKDESC</div>
<div class="a tx" style="left:85.5px;top:460.38px;font-size:14.5px;color:#000;transform:scaleX(0.93);transform-origin:0 0">0x00000000</div>
<div class="a tx" style="left:176px;top:460.38px;font-size:14.5px;color:#000;transform:scaleX(0.93);transform-origin:0 0">0x00000000</div>
<div class="a tx" style="left:269.5px;top:460.38px;font-size:14.5px;color:#000;transform:scaleX(0.93);transform-origin:0 0">0x00000000</div>
<div class="a tx" style="right:178.5px;top:460.38px;font-size:14.5px;color:#000;transform:scaleX(0.93);transform-origin:100% 0">606 b</div>
<div class="a tx" style="right:34.0px;top:460.38px;font-size:14.5px;color:#000;transform:scaleX(0.93);transform-origin:100% 0">389 b</div>
<div class="a tx" style="left:7.5px;top:481.63px;font-size:14.5px;color:#000;transform:scaleX(0.93);transform-origin:0 0">PRESET</div>
<div class="a tx" style="left:85.5px;top:481.63px;font-size:14.5px;color:#000;transform:scaleX(0.93);transform-origin:0 0">0x00000000</div>
<div class="a tx" style="left:176px;top:481.63px;font-size:14.5px;color:#000;transform:scaleX(0.93);transform-origin:0 0">0x68201C9E</div>
<div class="a tx" style="left:269.5px;top:481.63px;font-size:14.5px;color:#000;transform:scaleX(0.93);transform-origin:0 0">0x25BE8721</div>
<div class="a tx" style="right:175px;top:481.63px;font-size:14.5px;color:#000;transform:scaleX(0.93);transform-origin:100% 0">2.19 Kb</div>
<div class="a tx" style="right:34.0px;top:481.63px;font-size:14.5px;color:#000;transform:scaleX(0.93);transform-origin:100% 0">869 b</div>
<div class="a" style="left:670px;top:0px;width:21px;height:497px;background:#f0f0f0"></div>
<div class="a" style="left:670px;top:23px;width:19px;height:380px;background:#cdcdcd"></div>
<svg class="a" style="left:674.5px;top:8px" width="10" height="9"><path d="M1 7.5L5 3L9 7.5" fill="none" stroke="#5a5a5a" stroke-width="2"/></svg>
<svg class="a" style="left:674.5px;top:481px" width="10" height="9"><path d="M1 1.5L5 6L9 1.5" fill="none" stroke="#5a5a5a" stroke-width="2"/></svg>
</div>
<div class="a" style="left:833px;top:165px;width:225px;height:191px;background-color:#999;background-image:linear-gradient(45deg,#666 25%,transparent 25%,transparent 75%,#666 75%),linear-gradient(45deg,#666 25%,transparent 25%,transparent 75%,#666 75%);background-size:20px 20px;background-position:0 0,10px 10px"></div>
<div class="a" style="left:834px;top:640px;width:92px;height:24px;background:#e1e1e1;border:1px solid #adadad"></div>
<div class="a" style="left:966px;top:640px;width:91px;height:24px;background:#e1e1e1;border:1px solid #adadad"></div>
<div class="a tx" style="top:646.33px;font-size:14px;color:#000;font-family:'Liberation Sans',sans-serif;left:869px;">OK</div>
<div class="a tx" style="top:646.33px;font-size:14px;color:#000;font-family:'Liberation Sans',sans-serif;left:989px;">Cancel</div>
<div class="a" style="left:95px;top:682px;width:978px;height:1px;background:#dadada"></div>
<div class="a tx" style="top:687.92px;font-size:15px;color:#000;font-family:'Liberation Sans',sans-serif;left:100px;">25 items</div>
<svg class="a" style="left:1062px;top:691px" width="10" height="14"><rect x="6" y="1" width="2" height="2" fill="#b8b8b8"/><rect x="6" y="5" width="2" height="2" fill="#b8b8b8"/><rect x="6" y="9" width="2" height="2" fill="#b8b8b8"/><rect x="2" y="5" width="2" height="2" fill="#b8b8b8"/><rect x="2" y="9" width="2" height="2" fill="#b8b8b8"/></svg>
<div class="a" style="left:409px;top:272px;width:349px;height:251px;background:#f0f0f0;box-shadow:0 4px 12px 0 rgba(0,0,0,.17),0 0 5px rgba(0,0,0,.06);border:1px solid #e4e4e4;border-top:none"></div>
<div class="a" style="left:409px;top:272px;width:349px;height:33px;background:#fff"></div>
<div class="a tx" style="top:279.75px;font-size:15.41px;color:#a6a6a6;font-family:'Liberation Sans',sans-serif;left:413.7px;transform:scaleX(0.931);transform-origin:0 0;">Renumber</div>
<div class="a" style="left:731px;top:276px;width:25px;height:25px;background:#e3e3e3"></div>
<svg class="a" style="left:738px;top:283px" width="11" height="11"><path d="M1.5 1.5L9.5 9.5M9.5 1.5L1.5 9.5" stroke="#f6f6f6" stroke-width="1.2"/></svg>
<div class="a" style="left:426px;top:325px;width:17px;height:16px;background:#fff;border:1px solid #333"></div>
<div class="a" style="left:426px;top:354px;width:17px;height:16px;background:#fff;border:1px solid #333"></div>
<svg class="a" style="left:428px;top:356px" width="13" height="12"><path d="M1.5 6L5 9.5L11.5 2" fill="none" stroke="#444" stroke-width="1.7"/></svg>
<div class="a" style="left:426px;top:383px;width:17px;height:16px;background:#fff;border:1px solid #333"></div>
<svg class="a" style="left:428px;top:385px" width="13" height="12"><path d="M1.5 6L5 9.5L11.5 2" fill="none" stroke="#444" stroke-width="1.7"/></svg>
<div class="a" style="left:426px;top:419px;width:17px;height:16px;background:#fff;border:1px solid #333"></div>
<svg class="a" style="left:428px;top:421px" width="13" height="12"><path d="M1.5 6L5 9.5L11.5 2" fill="none" stroke="#444" stroke-width="1.7"/></svg>
<div class="a tx" style="top:324.13px;font-size:15.99px;color:#000;font-family:'Liberation Sans',sans-serif;left:449.6px;transform:scaleX(0.82);transform-origin:0 0;">Group Id</div>
<div class="a tx" style="top:352.73px;font-size:15.99px;color:#000;font-family:'Liberation Sans',sans-serif;left:450.0px;transform:scaleX(0.857);transform-origin:0 0;">Instance Id</div>
<div class="a tx" style="top:381.53px;font-size:15.99px;color:#000;font-family:'Liberation Sans',sans-serif;left:449.7px;transform:scaleX(0.848);transform-origin:0 0;">Second Instance Id</div>
<div class="a tx" style="top:417.53px;font-size:15.99px;color:#000;font-family:'Liberation Sans',sans-serif;left:450.0px;transform:scaleX(0.829);transform-origin:0 0;">Update references</div>
<div class="a" style="left:584px;top:321px;width:155px;height:25px;background:#f0f0f0;border:1px solid #d2d2d2"></div>
<div class="a tx" style="top:324.59px;font-size:15.7px;color:#8d8d8d;font-family:'Liberation Sans',sans-serif;left:588.5px;transform:scaleX(0.844);transform-origin:0 0;">0x00000000</div>
<div class="a" style="left:584px;top:350px;width:155px;height:25px;background:#fff;border:1px solid #7a7a7a"></div>
<div class="a tx" style="top:353.09px;font-size:15.7px;color:#000;font-family:'Liberation Sans',sans-serif;left:588.5px;transform:scaleX(0.821);transform-origin:0 0;">0xC1E55AEF</div>
<div class="a" style="left:584px;top:379px;width:155px;height:25px;background:#fff;border:1px solid #7a7a7a"></div>
<div class="a tx" style="top:381.89px;font-size:15.7px;color:#000;font-family:'Liberation Sans',sans-serif;left:588.5px;transform:scaleX(0.843);transform-origin:0 0;">0x1301DA97</div>
<div class="a" style="left:625px;top:413px;width:113px;height:26px;background:#e1e1e1;border:1px solid #adadad"></div>
<div class="a tx" style="top:417.15px;font-size:14.97px;color:#000;font-family:'Liberation Sans',sans-serif;left:640.8px;transform:scaleX(0.874);transform-origin:0 0;">Make random</div>
<div class="a" style="left:506px;top:484px;width:113px;height:26px;background:#e1e1e1;border:2px solid #0078d7"></div>
<div class="a tx" style="top:488.33px;font-size:15.55px;color:#000;font-family:'Liberation Sans',sans-serif;left:552.0px;transform:scaleX(0.872);transform-origin:0 0;">OK</div>
<div class="a" style="left:629px;top:484px;width:113px;height:26px;background:#e1e1e1;border:1px solid #adadad"></div>
<div class="a tx" style="top:488.33px;font-size:15.55px;color:#000;font-family:'Liberation Sans',sans-serif;left:663.0px;transform:scaleX(0.867);transform-origin:0 0;">Cancel</div>
<div class="a" style="left:141px;top:657px;width:922px;height:180px;background:#fff;border:1px solid #707070;box-shadow:0 2px 16px 3px rgba(0,0,0,.25)"></div>
<svg class="a" style="left:146px;top:660px" width="30" height="30" viewBox="0 0 30 30">
<defs><linearGradient id="np" x1="0" y1="0" x2="1" y2="1"><stop offset="0" stop-color="#e2f4fa"/><stop offset=".5" stop-color="#a8d8ea"/><stop offset="1" stop-color="#6ab4cf"/></linearGradient></defs>
<rect x="10.5" y="7.5" width="14.5" height="18.5" fill="#fbfbf6" stroke="#b4a070" stroke-width=".7"/>
<polygon points="9.5,7 23.5,7 21,23.8 5.2,23.8" fill="url(#np)"/>
<path d="M9 10.5h13.5M8.6 13h13.5M8.2 15.5h13.5M7.8 18h13.5M7.4 20.5h13.5" stroke="#c8e8f2" stroke-width=".7"/>
<path d="M10.5 9v-2a1 1 0 0 1 2 0v2M13.5 9v-2a1 1 0 0 1 2 0v2M16.5 9v-2a1 1 0 0 1 2 0v2M19.5 9v-2a1 1 0 0 1 2 0v2" fill="none" stroke="#606060" stroke-width=".8"/>
</svg>
<div class="a tx" style="top:667.39px;font-size:15.7px;color:#000;font-family:'Liberation Sans',sans-serif;left:176.5px;transform:scaleX(0.984);transform-origin:0 0;">*Untitled - Notepad</div>
<div class="a" style="left:909px;top:675px;width:12px;height:1px;background:#111"></div>
<div class="a" style="left:967px;top:670px;width:12px;height:12px;border:1px solid #111"></div>
<svg class="a" style="left:1025px;top:669px" width="15" height="15"><path d="M1 1L13 13M13 1L1 13" stroke="#111" stroke-width="1.1"/></svg>
<div class="a tx" style="top:699.35px;font-size:14.97px;color:#000;font-family:'Liberation Sans',sans-serif;left:149.6px;transform:scaleX(0.904);transform-origin:0 0;">File</div>
<div class="a tx" style="top:699.35px;font-size:14.97px;color:#000;font-family:'Liberation Sans',sans-serif;left:186.9px;transform:scaleX(0.956);transform-origin:0 0;">Edit</div>
<div class="a tx" style="top:699.35px;font-size:14.97px;color:#000;font-family:'Liberation Sans',sans-serif;left:226.5px;transform:scaleX(0.977);transform-origin:0 0;">Format</div>
<div class="a tx" style="top:699.35px;font-size:14.97px;color:#000;font-family:'Liberation Sans',sans-serif;left:287.2px;transform:scaleX(0.972);transform-origin:0 0;">View</div>
<div class="a tx" style="top:699.35px;font-size:14.97px;color:#000;font-family:'Liberation Sans',sans-serif;left:333.4px;transform:scaleX(1.004);transform-origin:0 0;">Help</div>
<div class="a" style="left:142px;top:719px;width:920px;height:1px;background:#f0f0f0"></div>
<div class="a" style="left:1042px;top:720px;width:20px;height:110px;background:#f0f0f0"></div>
<svg class="a" style="left:1046px;top:728px" width="12" height="8"><path d="M1 6.5L6 1.5L11 6.5" fill="none" stroke="#b0b0b0" stroke-width="1.2"/></svg>
<div class="a" style="left:733px;top:721px;width:104px;height:25px;background:#0078d7"></div>
<div class="a tx" style="left:148.7px;top:720.6px;font-family:'Liberation Mono',monospace;font-weight:bold;font-size:23.5px;letter-spacing:-1.12px;color:#000">afBottomNude 0x034AEECB-0x00000000-0xC1E55AEF<span style="color:#fff">1301DA97</span></div>
</body></html>
